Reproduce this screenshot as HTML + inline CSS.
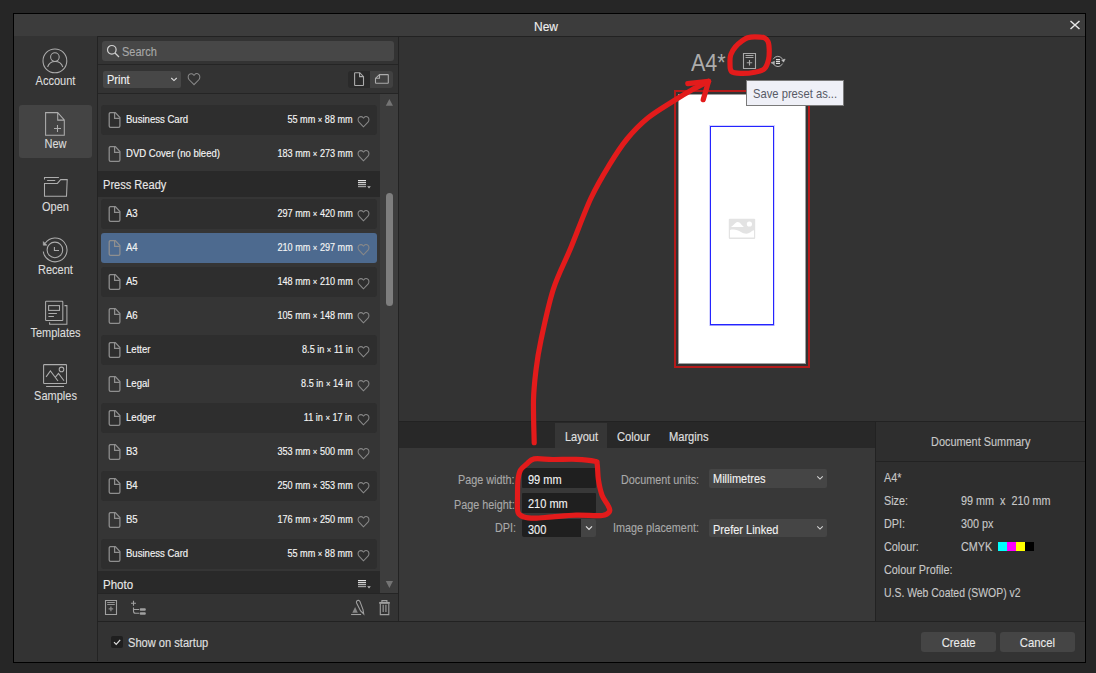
<!DOCTYPE html>
<html><head><meta charset="utf-8">
<style>
*{margin:0;padding:0;box-sizing:border-box}
html,body{width:1096px;height:673px;overflow:hidden;background:#262626;font-family:"Liberation Sans",sans-serif;color:#e8e8e8}
.a{position:absolute}
#frame{left:13px;top:13px;width:1073px;height:650px;border:1px solid #000;background:#333}
.t{position:absolute;white-space:pre;line-height:1;transform:scaleX(.91);transform-origin:0 0;-webkit-text-stroke:.12px currentColor}
.side .lbl{position:absolute;left:14px;width:83px;text-align:center;font-size:12.10px;color:#dcdcdc;transform:scaleX(.91);transform-origin:50% 0;-webkit-text-stroke:.12px currentColor}
.card{position:absolute;left:101px;width:276px;height:30px;border-radius:3px}
.card.d{background:#2e2e2e}
.card.sel{background:#4d6a8f}
.card .nm{position:absolute;left:25px;top:10px;font-size:10.34px;color:#f4f4f4;white-space:pre;line-height:1;transform:scaleX(.925);transform-origin:0 0;-webkit-text-stroke:.15px currentColor}
.card .dm{position:absolute;right:24.5px;top:10px;font-size:10.01px;color:#f4f4f4;white-space:pre;line-height:1;transform:scaleX(.91);transform-origin:100% 0;-webkit-text-stroke:.15px currentColor}
.card svg.pg{position:absolute;left:7px;top:7px}
.card svg.ht{position:absolute;left:256px;top:10px}
.hdr{position:absolute;left:98px;width:282px;background:#292929}
.hdr .ht2{position:absolute;left:5px;font-size:12.65px;color:#e8e8e8;white-space:pre;line-height:1;transform:scaleX(.91);transform-origin:0 0;-webkit-text-stroke:.12px currentColor}
.lab{position:absolute;font-size:11.88px;color:#a9a9a9;white-space:pre;line-height:1;text-align:right;transform:scaleX(.91);transform-origin:0 0;-webkit-text-stroke:.12px currentColor}
.inp{position:absolute;background:#1f1f1f;border-radius:2px}
.inp span{position:absolute;left:6px;top:5px;font-size:12.10px;color:#f2f2f2;white-space:pre;line-height:1;transform:scaleX(.91);transform-origin:0 0;-webkit-text-stroke:.12px currentColor}
.dd{position:absolute;background:#454545;border-radius:2px}
.dd span{position:absolute;left:4px;top:5px;font-size:12.10px;color:#f2f2f2;white-space:pre;line-height:1;transform:scaleX(.91);transform-origin:0 0;-webkit-text-stroke:.12px currentColor}
.sum{position:absolute;left:884px;font-size:11.88px;color:#c8c8c8;white-space:pre;line-height:1;transform:scaleX(.91);transform-origin:0 0;-webkit-text-stroke:.12px currentColor}
.btn{position:absolute;top:632px;width:75px;height:19.5px;background:#454545;border-radius:3px;-webkit-text-stroke:.12px currentColor;font-size:12.43px;color:#eaeaea;text-align:center;line-height:19.5px}
</style></head><body>
<div id="frame" class="a"></div>
<!-- title bar -->
<div class="a" style="left:14px;top:14px;width:1071px;height:22px;background:#3c3c3c"></div>
<div class="a" style="left:97px;top:36px;width:988px;height:1px;background:#222"></div>
<div class="t" style="left:534px;top:19.5px;font-size:13.20px;color:#f0f0f0">New</div>
<svg class="a" style="left:1069px;top:20px" width="12" height="10"><path d="M1.5 1 L10.5 9 M10.5 1 L1.5 9" stroke="#e6e6e6" stroke-width="1.5"/></svg>

<!-- sidebar -->
<div class="a" style="left:14px;top:36px;width:83px;height:625px;background:#333"></div>
<div class="a" style="left:97px;top:36px;width:1px;height:625px;background:#232323"></div>

<div class="side">
<svg class="a" style="left:38px;top:44px" width="34" height="34" fill="none" stroke="#adadad" stroke-width="1.05"><circle cx="16.9" cy="16.9" r="11.9"/><circle cx="16.9" cy="13.1" r="4.3"/><path d="M9.6 23 A7.96 7.96 0 0 1 24.8 23"/></svg>
<div class="lbl" style="top:74px">Account</div>
<div class="a" style="left:19px;top:105px;width:73px;height:53px;background:#444;border-radius:3px"></div>
<svg class="a" style="left:38px;top:107px" width="34" height="34" fill="none" stroke="#adadad" stroke-width="1.05"><path d="M7.6 5.6 H19.7 L26.3 12.9 V28.3 H7.6 Z M19.7 5.8 V13.1 H26.3"/><path d="M19.5 18 V25 M16 21.5 H23"/></svg>
<div class="lbl" style="top:137px">New</div>
<svg class="a" style="left:38px;top:170px" width="34" height="30" fill="none" stroke="#adadad" stroke-width="1.05"><path d="M6.5 9.6 V7.4 H20.9 M9.1 10.5 H17.2"/><path d="M6.5 26.3 V13.4 H19.4 L22.7 9.6 H29.2 L28.5 26.3 Z"/></svg>
<div class="lbl" style="top:200px">Open</div>
<svg class="a" style="left:38px;top:232px" width="34" height="34" fill="none" stroke="#adadad" stroke-width="1.05"><path d="M5.3 19.5 A11.9 11.9 0 1 0 7.2 11.3"/><path d="M5.3 9.6 L5.3 13.2 L8.9 13.2 Z" fill="#adadad" stroke-width="0.6"/><circle cx="16.9" cy="17.9" r="7.8"/><path d="M16.4 14.9 V18.4 H21"/></svg>
<div class="lbl" style="top:263px">Recent</div>
<svg class="a" style="left:38px;top:295px" width="34" height="34" fill="none" stroke="#adadad" stroke-width="1.05"><rect x="7.6" y="6.3" width="17.2" height="19.2" rx="0.6"/><rect x="10.6" y="10.6" width="10.9" height="4.8"/><path d="M10.4 18.4 H18.9 M10.4 21.5 H15.9"/><path d="M26.5 10.6 H28.9 V29.3 H11.6 V27.3"/></svg>
<div class="lbl" style="top:326px">Templates</div>
<svg class="a" style="left:38px;top:358px" width="34" height="34" fill="none" stroke="#adadad" stroke-width="1.05"><rect x="5.6" y="6.6" width="22.9" height="18.9" rx="0.6"/><path d="M8.1 28.5 H26"/><path d="M8.1 18.9 L12.4 12.9 L20 23 M17.4 19.2 L20.5 15.4 L26 22.7"/><circle cx="23.5" cy="11.4" r="2.3"/></svg>
<div class="lbl" style="top:389px">Samples</div>
</div>

<!-- list panel -->
<div class="a" style="left:98px;top:37px;width:300px;height:584px;background:#333"></div>
<div class="a" style="left:102px;top:41px;width:292px;height:20px;background:#474747;border-radius:3px"></div>
<svg class="a" style="left:106px;top:44px" width="14" height="14" fill="none" stroke="#d0d0d0" stroke-width="1.2"><circle cx="5.8" cy="5.8" r="4.3"/><path d="M9 9 L13 13"/></svg>
<div class="t" style="left:122px;top:46px;font-size:12.10px;color:#a8a8a8">Search</div>
<div class="a" style="left:98px;top:64px;width:300px;height:1px;background:#252525"></div>
<div class="dd" style="left:103px;top:71px;width:78px;height:17px;background:#474747"><span style="left:4px;top:3px;font-size:12.10px">Print</span></div>
<svg class="a" style="left:169px;top:75px" width="10" height="8" fill="none" stroke="#dcdcdc" stroke-width="1.1"><path d="M2.3 3 L5 5.6 L7.7 3"/></svg>
<svg class="a" style="left:187px;top:72px" width="14" height="14" viewBox="0 0 13 13" fill="none" stroke="#8a8a8a" stroke-width="0.95"><path d="M6.5 11.8 L2 7.2 C0.8 6 0.8 3.4 1.9 2.4 C3.1 1.3 5 1.4 6.1 2.6 L6.5 3 L6.9 2.6 C8 1.4 9.9 1.3 11.1 2.4 C12.2 3.4 12.2 6 11 7.2 Z"/></svg>
<div class="a" style="left:348px;top:71px;width:22px;height:17px;background:#2a2a2a;border-radius:3px 0 0 3px"></div>
<div class="a" style="left:370px;top:71px;width:23px;height:17px;background:#414141;border-radius:0 3px 3px 0"></div>
<svg class="a" style="left:348px;top:71px" width="45" height="17" fill="none" stroke="#ababab" stroke-width="1.1"><path d="M6.6 2.2 Q6.6 1.7 7.1 1.7 H11.8 L15.5 5.6 V14 Q15.5 14.5 15 14.5 H7.1 Q6.6 14.5 6.6 14 Z"/><path d="M11.6 1.9 V5.6 H15.4"/><path d="M27.5 7.3 L31.5 3.6 H39.8 Q40.3 3.6 40.3 4.1 V11.7 Q40.3 12.2 39.8 12.2 H28 Q27.5 12.2 27.5 11.7 Z"/><path d="M31.5 3.8 V7.3 H27.6"/></svg>
<div class="a" style="left:98px;top:93px;width:300px;height:1px;background:#252525"></div>
<div class="a" style="left:98px;top:94px;width:282px;height:477px;background:#353535"></div>
<!-- scrollbar -->
<div class="a" style="left:380px;top:94px;width:18px;height:499px;background:#3d3d3d"></div>
<svg class="a" style="left:384px;top:97px" width="10" height="10"><path d="M1.8 8.8 L5.4 1.9 L9 8.8 Z" fill="#747474"/></svg>
<div class="a" style="left:386px;top:193px;width:7px;height:113px;background:#7e7e7e;border-radius:3.5px"></div>
<svg class="a" style="left:384px;top:580px" width="10" height="9"><path d="M1.8 1 L5.4 8 L9 1 Z" fill="#747474"/></svg>

<div class="card d" style="top:105px"><svg class="pg" width="14" height="17" fill="none" stroke="#8f8f8f" stroke-width="1.25"><path d="M1.2 2 Q1.2 0.6 2.6 0.6 H7.3 L11.9 5.6 V14 Q11.9 15.4 10.5 15.4 H2.6 Q1.2 15.4 1.2 14 Z"/><path d="M6.6 0.8 V6.3 H11.9"/></svg><div class="nm">Business Card</div><div class="dm">55 mm <span style="font-size:8.5px;vertical-align:0.5px">×</span> 88 mm</div><svg class="ht" width="13" height="13" fill="none" stroke="#888" stroke-width="1.05"><path d="M6.5 11.8 L2 7.2 C0.8 6 0.8 3.4 1.9 2.4 C3.1 1.3 5 1.4 6.1 2.6 L6.5 3 L6.9 2.6 C8 1.4 9.9 1.3 11.1 2.4 C12.2 3.4 12.2 6 11 7.2 Z"/></svg></div>
<div class="card " style="top:139px"><svg class="pg" width="14" height="17" fill="none" stroke="#8f8f8f" stroke-width="1.25"><path d="M1.2 2 Q1.2 0.6 2.6 0.6 H7.3 L11.9 5.6 V14 Q11.9 15.4 10.5 15.4 H2.6 Q1.2 15.4 1.2 14 Z"/><path d="M6.6 0.8 V6.3 H11.9"/></svg><div class="nm">DVD Cover (no bleed)</div><div class="dm">183 mm <span style="font-size:8.5px;vertical-align:0.5px">×</span> 273 mm</div><svg class="ht" width="13" height="13" fill="none" stroke="#888" stroke-width="1.05"><path d="M6.5 11.8 L2 7.2 C0.8 6 0.8 3.4 1.9 2.4 C3.1 1.3 5 1.4 6.1 2.6 L6.5 3 L6.9 2.6 C8 1.4 9.9 1.3 11.1 2.4 C12.2 3.4 12.2 6 11 7.2 Z"/></svg></div>
<div class="card d" style="top:199px"><svg class="pg" width="14" height="17" fill="none" stroke="#8f8f8f" stroke-width="1.25"><path d="M1.2 2 Q1.2 0.6 2.6 0.6 H7.3 L11.9 5.6 V14 Q11.9 15.4 10.5 15.4 H2.6 Q1.2 15.4 1.2 14 Z"/><path d="M6.6 0.8 V6.3 H11.9"/></svg><div class="nm">A3</div><div class="dm">297 mm <span style="font-size:8.5px;vertical-align:0.5px">×</span> 420 mm</div><svg class="ht" width="13" height="13" fill="none" stroke="#888" stroke-width="1.05"><path d="M6.5 11.8 L2 7.2 C0.8 6 0.8 3.4 1.9 2.4 C3.1 1.3 5 1.4 6.1 2.6 L6.5 3 L6.9 2.6 C8 1.4 9.9 1.3 11.1 2.4 C12.2 3.4 12.2 6 11 7.2 Z"/></svg></div>
<div class="card sel" style="top:233px"><svg class="pg" width="14" height="17" fill="none" stroke="#8f8f8f" stroke-width="1.25"><path d="M1.2 2 Q1.2 0.6 2.6 0.6 H7.3 L11.9 5.6 V14 Q11.9 15.4 10.5 15.4 H2.6 Q1.2 15.4 1.2 14 Z"/><path d="M6.6 0.8 V6.3 H11.9"/></svg><div class="nm">A4</div><div class="dm">210 mm <span style="font-size:8.5px;vertical-align:0.5px">×</span> 297 mm</div><svg class="ht" width="13" height="13" fill="none" stroke="#888" stroke-width="1.05"><path d="M6.5 11.8 L2 7.2 C0.8 6 0.8 3.4 1.9 2.4 C3.1 1.3 5 1.4 6.1 2.6 L6.5 3 L6.9 2.6 C8 1.4 9.9 1.3 11.1 2.4 C12.2 3.4 12.2 6 11 7.2 Z"/></svg></div>
<div class="card d" style="top:267px"><svg class="pg" width="14" height="17" fill="none" stroke="#8f8f8f" stroke-width="1.25"><path d="M1.2 2 Q1.2 0.6 2.6 0.6 H7.3 L11.9 5.6 V14 Q11.9 15.4 10.5 15.4 H2.6 Q1.2 15.4 1.2 14 Z"/><path d="M6.6 0.8 V6.3 H11.9"/></svg><div class="nm">A5</div><div class="dm">148 mm <span style="font-size:8.5px;vertical-align:0.5px">×</span> 210 mm</div><svg class="ht" width="13" height="13" fill="none" stroke="#888" stroke-width="1.05"><path d="M6.5 11.8 L2 7.2 C0.8 6 0.8 3.4 1.9 2.4 C3.1 1.3 5 1.4 6.1 2.6 L6.5 3 L6.9 2.6 C8 1.4 9.9 1.3 11.1 2.4 C12.2 3.4 12.2 6 11 7.2 Z"/></svg></div>
<div class="card " style="top:301px"><svg class="pg" width="14" height="17" fill="none" stroke="#8f8f8f" stroke-width="1.25"><path d="M1.2 2 Q1.2 0.6 2.6 0.6 H7.3 L11.9 5.6 V14 Q11.9 15.4 10.5 15.4 H2.6 Q1.2 15.4 1.2 14 Z"/><path d="M6.6 0.8 V6.3 H11.9"/></svg><div class="nm">A6</div><div class="dm">105 mm <span style="font-size:8.5px;vertical-align:0.5px">×</span> 148 mm</div><svg class="ht" width="13" height="13" fill="none" stroke="#888" stroke-width="1.05"><path d="M6.5 11.8 L2 7.2 C0.8 6 0.8 3.4 1.9 2.4 C3.1 1.3 5 1.4 6.1 2.6 L6.5 3 L6.9 2.6 C8 1.4 9.9 1.3 11.1 2.4 C12.2 3.4 12.2 6 11 7.2 Z"/></svg></div>
<div class="card d" style="top:335px"><svg class="pg" width="14" height="17" fill="none" stroke="#8f8f8f" stroke-width="1.25"><path d="M1.2 2 Q1.2 0.6 2.6 0.6 H7.3 L11.9 5.6 V14 Q11.9 15.4 10.5 15.4 H2.6 Q1.2 15.4 1.2 14 Z"/><path d="M6.6 0.8 V6.3 H11.9"/></svg><div class="nm">Letter</div><div class="dm">8.5 in <span style="font-size:8.5px;vertical-align:0.5px">×</span> 11 in</div><svg class="ht" width="13" height="13" fill="none" stroke="#888" stroke-width="1.05"><path d="M6.5 11.8 L2 7.2 C0.8 6 0.8 3.4 1.9 2.4 C3.1 1.3 5 1.4 6.1 2.6 L6.5 3 L6.9 2.6 C8 1.4 9.9 1.3 11.1 2.4 C12.2 3.4 12.2 6 11 7.2 Z"/></svg></div>
<div class="card " style="top:369px"><svg class="pg" width="14" height="17" fill="none" stroke="#8f8f8f" stroke-width="1.25"><path d="M1.2 2 Q1.2 0.6 2.6 0.6 H7.3 L11.9 5.6 V14 Q11.9 15.4 10.5 15.4 H2.6 Q1.2 15.4 1.2 14 Z"/><path d="M6.6 0.8 V6.3 H11.9"/></svg><div class="nm">Legal</div><div class="dm">8.5 in <span style="font-size:8.5px;vertical-align:0.5px">×</span> 14 in</div><svg class="ht" width="13" height="13" fill="none" stroke="#888" stroke-width="1.05"><path d="M6.5 11.8 L2 7.2 C0.8 6 0.8 3.4 1.9 2.4 C3.1 1.3 5 1.4 6.1 2.6 L6.5 3 L6.9 2.6 C8 1.4 9.9 1.3 11.1 2.4 C12.2 3.4 12.2 6 11 7.2 Z"/></svg></div>
<div class="card d" style="top:403px"><svg class="pg" width="14" height="17" fill="none" stroke="#8f8f8f" stroke-width="1.25"><path d="M1.2 2 Q1.2 0.6 2.6 0.6 H7.3 L11.9 5.6 V14 Q11.9 15.4 10.5 15.4 H2.6 Q1.2 15.4 1.2 14 Z"/><path d="M6.6 0.8 V6.3 H11.9"/></svg><div class="nm">Ledger</div><div class="dm">11 in <span style="font-size:8.5px;vertical-align:0.5px">×</span> 17 in</div><svg class="ht" width="13" height="13" fill="none" stroke="#888" stroke-width="1.05"><path d="M6.5 11.8 L2 7.2 C0.8 6 0.8 3.4 1.9 2.4 C3.1 1.3 5 1.4 6.1 2.6 L6.5 3 L6.9 2.6 C8 1.4 9.9 1.3 11.1 2.4 C12.2 3.4 12.2 6 11 7.2 Z"/></svg></div>
<div class="card " style="top:437px"><svg class="pg" width="14" height="17" fill="none" stroke="#8f8f8f" stroke-width="1.25"><path d="M1.2 2 Q1.2 0.6 2.6 0.6 H7.3 L11.9 5.6 V14 Q11.9 15.4 10.5 15.4 H2.6 Q1.2 15.4 1.2 14 Z"/><path d="M6.6 0.8 V6.3 H11.9"/></svg><div class="nm">B3</div><div class="dm">353 mm <span style="font-size:8.5px;vertical-align:0.5px">×</span> 500 mm</div><svg class="ht" width="13" height="13" fill="none" stroke="#888" stroke-width="1.05"><path d="M6.5 11.8 L2 7.2 C0.8 6 0.8 3.4 1.9 2.4 C3.1 1.3 5 1.4 6.1 2.6 L6.5 3 L6.9 2.6 C8 1.4 9.9 1.3 11.1 2.4 C12.2 3.4 12.2 6 11 7.2 Z"/></svg></div>
<div class="card d" style="top:471px"><svg class="pg" width="14" height="17" fill="none" stroke="#8f8f8f" stroke-width="1.25"><path d="M1.2 2 Q1.2 0.6 2.6 0.6 H7.3 L11.9 5.6 V14 Q11.9 15.4 10.5 15.4 H2.6 Q1.2 15.4 1.2 14 Z"/><path d="M6.6 0.8 V6.3 H11.9"/></svg><div class="nm">B4</div><div class="dm">250 mm <span style="font-size:8.5px;vertical-align:0.5px">×</span> 353 mm</div><svg class="ht" width="13" height="13" fill="none" stroke="#888" stroke-width="1.05"><path d="M6.5 11.8 L2 7.2 C0.8 6 0.8 3.4 1.9 2.4 C3.1 1.3 5 1.4 6.1 2.6 L6.5 3 L6.9 2.6 C8 1.4 9.9 1.3 11.1 2.4 C12.2 3.4 12.2 6 11 7.2 Z"/></svg></div>
<div class="card " style="top:505px"><svg class="pg" width="14" height="17" fill="none" stroke="#8f8f8f" stroke-width="1.25"><path d="M1.2 2 Q1.2 0.6 2.6 0.6 H7.3 L11.9 5.6 V14 Q11.9 15.4 10.5 15.4 H2.6 Q1.2 15.4 1.2 14 Z"/><path d="M6.6 0.8 V6.3 H11.9"/></svg><div class="nm">B5</div><div class="dm">176 mm <span style="font-size:8.5px;vertical-align:0.5px">×</span> 250 mm</div><svg class="ht" width="13" height="13" fill="none" stroke="#888" stroke-width="1.05"><path d="M6.5 11.8 L2 7.2 C0.8 6 0.8 3.4 1.9 2.4 C3.1 1.3 5 1.4 6.1 2.6 L6.5 3 L6.9 2.6 C8 1.4 9.9 1.3 11.1 2.4 C12.2 3.4 12.2 6 11 7.2 Z"/></svg></div>
<div class="card d" style="top:539px"><svg class="pg" width="14" height="17" fill="none" stroke="#8f8f8f" stroke-width="1.25"><path d="M1.2 2 Q1.2 0.6 2.6 0.6 H7.3 L11.9 5.6 V14 Q11.9 15.4 10.5 15.4 H2.6 Q1.2 15.4 1.2 14 Z"/><path d="M6.6 0.8 V6.3 H11.9"/></svg><div class="nm">Business Card</div><div class="dm">55 mm <span style="font-size:8.5px;vertical-align:0.5px">×</span> 88 mm</div><svg class="ht" width="13" height="13" fill="none" stroke="#888" stroke-width="1.05"><path d="M6.5 11.8 L2 7.2 C0.8 6 0.8 3.4 1.9 2.4 C3.1 1.3 5 1.4 6.1 2.6 L6.5 3 L6.9 2.6 C8 1.4 9.9 1.3 11.1 2.4 C12.2 3.4 12.2 6 11 7.2 Z"/></svg></div>
<div class="hdr" style="top:171px;height:26px"><div class="ht2" style="top:8px;transform:scaleX(.875)">Press Ready</div><svg class="a" style="left:260px;top:9px" width="14" height="10"><rect x="0" y="0" width="8" height="1.2" fill="#e6e6e6"/><rect x="0" y="2" width="8" height="1.2" fill="#d8d8d8"/><rect x="0" y="4" width="8" height="1.2" fill="#b8b8b8"/><rect x="0" y="6" width="8" height="1.2" fill="#a0a0a0"/><path d="M9.2 6.3 H12.8 L11 8.6 Z" fill="#bdbdbd"/></svg></div>
<div class="hdr" style="top:571px;height:22px"><div class="ht2" style="top:8px">Photo</div><svg class="a" style="left:260px;top:9px" width="14" height="10"><rect x="0" y="0" width="8" height="1.2" fill="#e6e6e6"/><rect x="0" y="2" width="8" height="1.2" fill="#d8d8d8"/><rect x="0" y="4" width="8" height="1.2" fill="#b8b8b8"/><rect x="0" y="6" width="8" height="1.2" fill="#a0a0a0"/><path d="M9.2 6.3 H12.8 L11 8.6 Z" fill="#bdbdbd"/></svg></div>
<div class="a" style="left:98px;top:593px;width:300px;height:1px;background:#252525"></div>
<!-- list toolbar -->
<svg class="a" style="left:104px;top:599px" width="14" height="17" fill="none" stroke="#a0a0a0" stroke-width="1.1"><path d="M1.5 1.5 H12.5 V15.5 H1.5 Z"/><path d="M3.2 3.5 H10.8 M3.2 5.5 H10.8" stroke-width="0.9"/><path d="M6.9 7.5 V12.2 M4.6 9.8 H9.2" stroke-width="1.3" stroke="#8a8a8a"/></svg>
<svg class="a" style="left:130px;top:600px" width="17" height="16" fill="none" stroke="#a0a0a0" stroke-width="1.1"><path d="M3.5 0.8 V5.8 M1 3.3 H6"/><path d="M3.5 7.6 V11.3 Q3.5 13.3 5.5 13.3 H9.2 M3.5 9.5 H9"/><rect x="9.7" y="8.3" width="6.1" height="2.5" rx="1" fill="#a0a0a0" stroke="none"/><rect x="9.7" y="12.2" width="6.1" height="2.5" rx="1" fill="#a0a0a0" stroke="none"/></svg>
<svg class="a" style="left:344px;top:596px" width="48" height="24" fill="none" stroke="#a0a0a0" stroke-width="1.1"><path d="M7.1 18.5 H17.1"/><path d="M8.3 16.8 L11.1 10.9 L13.8 16.8 Z" fill="#8a8a8a" stroke="none"/><path d="M12.6 6.9 A1.8 1.8 0 0 1 15.9 5.4 L19 13.6 L19.7 18 L16.6 14.9 Z"/><path d="M35.2 6.9 H45.8" stroke-width="1.9"/><path d="M37.9 6 V4.6 H42.9 V6"/><path d="M36.3 7.8 V18.6 H44.8 V7.8"/><path d="M39.2 8.8 V15.9 M41.9 8.8 V15.9" stroke-width="1.4" stroke="#888"/></svg>
<div class="a" style="left:398px;top:37px;width:1px;height:584px;background:#232323"></div>


<!-- preview -->
<div class="a" style="left:399px;top:37px;width:686px;height:384px;background:#333"></div>
<div class="t" style="left:690.5px;top:52px;font-size:23.1px;color:#acacac;transform:scaleX(.932);-webkit-text-stroke:0">A4*</div>
<svg class="a" style="left:742px;top:52px" width="15" height="18" fill="none" stroke="#a8a8a8" stroke-width="1.1"><path d="M1.5 1.5 H13.5 V16.5 H1.5 Z M3.5 3.5 H11.5 M3.5 5.5 H11.5 M7.5 8 V13.5 M4.8 10.8 H10.2"/></svg>
<svg class="a" style="left:766px;top:50px" width="24" height="22" fill="none" stroke="#bcbcbc" stroke-width="0.9"><path d="M7.3 9.2 A5.1 5.1 0 0 1 16.4 9"/><path d="M16.6 13.6 A5.1 5.1 0 0 1 7.4 13.8"/><path d="M15.6 9.9 L19.2 9.1 L17.6 12.2 Z" fill="#c4c4c4" stroke-width="0.5"/><path d="M5 12.8 L8.6 11.3 L8.3 14.3 Z" fill="#b0b0b0" stroke-width="0.5"/><path d="M10 9.6 H14 M10 11.5 H14 M10 13.4 H14" stroke="#dcdcdc" stroke-width="1.15"/></svg>
<div class="a" style="left:674px;top:90px;width:136px;height:278px;border:2px solid #b51a1a"></div>
<div class="a" style="left:678px;top:94px;width:128px;height:270px;background:#fff;border:1px solid #a0a0a0"></div>
<div class="a" style="left:710px;top:126px;width:64px;height:199px;border:1px solid #2424ff;box-shadow:0 0 0 1px rgba(60,60,255,.22),0 1px 0 rgba(70,70,255,.4)"></div>
<svg class="a" style="left:728px;top:218px" width="28" height="22"><rect x="0.8" y="0.8" width="26.4" height="20.2" rx="1" fill="#e3e3e3"/><path d="M2 12 C6 11 10 12 13 14 C15.5 15.5 18.5 16.5 21 15 C23 14 24.5 12.5 26 12.3 V19.6 H2 Z" fill="#fff"/><path d="M2.9 8.9 C5 7.5 6 6.5 7.5 5 C8.5 3.8 10 3.5 11.5 4.5 C13 6 14 7.5 15.9 8.9 Z" fill="#fff"/><circle cx="21.4" cy="6" r="2.6" fill="#fff"/></svg>
<!-- tooltip -->
<div class="a" style="left:746px;top:80px;width:98px;height:26px;background:#eff0f7;border:1px solid #7a7a7a"></div>
<div class="t" style="left:753px;top:88px;font-size:12.32px;color:#575a66;-webkit-text-stroke:0">Save preset as...</div>

<!-- properties -->
<div class="a" style="left:399px;top:421px;width:686px;height:1px;background:#222"></div>
<div class="a" style="left:399px;top:422px;width:476px;height:26px;background:#282828"></div>
<div class="a" style="left:399px;top:448px;width:476px;height:173px;background:#383838"></div>
<div class="a" style="left:555px;top:423px;width:52px;height:25px;background:#363636"></div>
<div class="t" style="left:565px;top:431px;font-size:12.10px;color:#e0e0e0">Layout</div>
<div class="t" style="left:617px;top:431px;font-size:12.32px;color:#e0e0e0">Colour</div>
<div class="t" style="left:669px;top:431px;font-size:12.21px;color:#e0e0e0">Margins</div>

<div class="lab" style="left:458px;top:475px">Page width:</div>
<div class="lab" style="left:454px;top:499.5px">Page height:</div>
<div class="lab" style="left:495px;top:523px">DPI:</div>
<div class="inp" style="left:522px;top:468px;width:74px;height:20px;border-radius:1px"><span style="top:6px">99 mm</span></div>
<div class="inp" style="left:522px;top:493px;width:74px;height:20px;border-radius:1px"><span>210 mm</span></div>
<div class="inp" style="left:522px;top:519px;width:59px;height:18px;border-radius:2px 0 0 2px"><span style="top:5px">300</span></div>
<div class="a" style="left:581px;top:519px;width:15px;height:18px;background:#444;border-radius:0 2px 2px 0"></div>
<svg class="a" style="left:584px;top:524px" width="10" height="8" fill="none" stroke="#e0e0e0" stroke-width="1.2"><path d="M2 2.3 L5 5.3 L8 2.3"/></svg>

<div class="lab" style="left:621px;top:475px">Document units:</div>
<div class="lab" style="left:613px;top:523px">Image placement:</div>
<div class="dd" style="left:709px;top:469px;width:118px;height:19px"><span style="top:4px">Millimetres</span></div>
<div class="dd" style="left:709px;top:519px;width:118px;height:18px"><span style="top:4.5px">Prefer Linked</span></div>
<svg class="a" style="left:815px;top:474px" width="10" height="8" fill="none" stroke="#d8d8d8" stroke-width="1.05"><path d="M2.3 2.3 L5 5 L7.7 2.3"/></svg>
<svg class="a" style="left:815px;top:524px" width="10" height="8" fill="none" stroke="#d8d8d8" stroke-width="1.05"><path d="M2.3 2.3 L5 5 L7.7 2.3"/></svg>

<!-- summary -->
<div class="a" style="left:875px;top:422px;width:1px;height:199px;background:#222"></div>
<div class="a" style="left:876px;top:422px;width:209px;height:199px;background:#2e2e2e"></div>
<div class="a" style="left:876px;top:461px;width:209px;height:1px;background:#222"></div>
<div class="t" style="left:931px;top:436px;font-size:11.99px;color:#c8c8c8">Document Summary</div>
<div class="sum" style="top:473px">A4*</div>
<div class="sum" style="top:496px">Size:</div>
<div class="sum" style="top:496px;left:961px">99 mm  x  210 mm</div>
<div class="sum" style="top:519px">DPI:</div>
<div class="sum" style="top:519px;left:961px">300 px</div>
<div class="sum" style="top:542px">Colour:</div>
<div class="sum" style="top:542px;left:961px">CMYK</div>
<div class="a" style="left:998px;top:542px;width:9px;height:9px;background:#00ffff"></div>
<div class="a" style="left:1007px;top:542px;width:9px;height:9px;background:#ff00ff"></div>
<div class="a" style="left:1016px;top:542px;width:9px;height:9px;background:#ffff00"></div>
<div class="a" style="left:1025px;top:542px;width:9px;height:9px;background:#000"></div>
<div class="sum" style="top:565px">Colour Profile:</div>
<div class="sum" style="top:588px;transform:scaleX(.878)">U.S. Web Coated (SWOP) v2</div>

<!-- footer -->
<div class="a" style="left:97px;top:621px;width:988px;height:1px;background:#222"></div>
<div class="a" style="left:98px;top:622px;width:987px;height:39px;background:#333"></div>
<div class="a" style="left:111px;top:636px;width:12px;height:12px;background:#1f1f1f;border-radius:2px"></div>
<svg class="a" style="left:111px;top:636px" width="12" height="12" fill="none" stroke="#e0e0e0" stroke-width="1.2"><path d="M3 6.2 L5.2 8.4 L9.2 3.8"/></svg>
<div class="t" style="left:128px;top:636.5px;font-size:12.21px;color:#e0e0e0">Show on startup</div>
<div class="btn" style="left:921px"><span style="display:inline-block;position:relative;top:2px;transform:scaleX(.91)">Create</span></div>
<div class="btn" style="left:1000px"><span style="display:inline-block;position:relative;top:2px;transform:scaleX(.91)">Cancel</span></div>

<!-- annotations -->
<svg class="a" style="left:0;top:0" width="1096" height="673" fill="none" stroke="#e31b1b" stroke-width="5.2" stroke-linecap="round" stroke-linejoin="round">
<path d="M534.2 442.7 C534.1 435.6 533.2 412.1 533.5 400.0 C533.8 387.9 534.8 380.0 536.0 370.0 C537.2 360.0 538.1 353.5 541.0 340.0 C543.9 326.5 548.5 304.2 553.4 289.0 C558.3 273.8 564.2 263.7 570.5 248.5 C576.8 233.3 584.5 211.9 591.0 198.0 C597.5 184.1 603.2 174.9 609.2 165.1 C615.2 155.3 620.6 146.8 627.0 139.0 C633.4 131.2 639.8 124.5 647.8 118.0 C655.8 111.5 667.8 104.6 675.0 100.0 C682.2 95.4 685.7 93.3 691.3 90.2 C696.9 87.1 705.7 82.8 708.6 81.3"/>
<path d="M687.8 83.7 L708.6 81.3 L703.2 99.7"/>
<path d="M534.1 458.9 C538.5 458.1 545.5 459.4 552.5 459.5 C559.5 459.6 569.2 459.0 576.3 459.3 C583.3 459.6 591.3 460.5 594.8 461.3 C598.3 462.1 596.6 461.2 597.2 464.3 C597.8 467.4 597.6 474.6 598.4 479.7 C599.2 484.8 600.4 490.8 602.0 495.1 C603.6 499.5 607.0 503.1 608.2 505.8 C609.5 508.5 610.5 509.9 609.5 511.5 C608.5 513.1 607.9 514.9 602.4 515.5 C596.9 516.1 584.6 515.0 576.3 515.2 C568.0 515.4 559.4 516.3 552.5 516.8 C545.6 517.3 539.5 518.2 534.7 518.2 C530.0 518.2 526.8 518.0 524.0 517.0 C521.2 516.0 519.1 515.5 518.0 512.3 C516.9 509.0 517.5 502.9 517.5 497.5 C517.5 492.1 517.5 484.2 518.0 479.7 C518.5 475.1 519.0 472.8 520.4 470.2 C521.8 467.6 524.1 466.2 526.4 464.3 C528.7 462.4 529.8 459.7 534.1 458.9 Z"/>
<path d="M754.8 36.8 C757.5 36.8 761.8 36.8 764.0 37.6 C766.2 38.4 767.1 39.6 768.0 41.5 C768.9 43.4 769.1 46.1 769.2 49.1 C769.3 52.1 769.4 56.0 768.6 59.3 C767.8 62.6 766.6 66.8 764.3 68.9 C762.0 71.1 758.7 71.5 754.8 72.2 C750.9 73.0 745.0 73.5 741.1 73.4 C737.2 73.3 733.4 73.3 731.5 71.5 C729.6 69.7 730.1 65.6 730.0 62.8 C729.9 60.0 729.9 57.2 730.8 54.6 C731.7 52.0 733.4 49.3 735.3 47.0 C737.2 44.7 740.0 42.4 742.1 40.9 C744.2 39.4 745.5 38.5 747.6 37.8 C749.7 37.1 752.1 36.8 754.8 36.8 Z"/>
</svg>

</body></html>
